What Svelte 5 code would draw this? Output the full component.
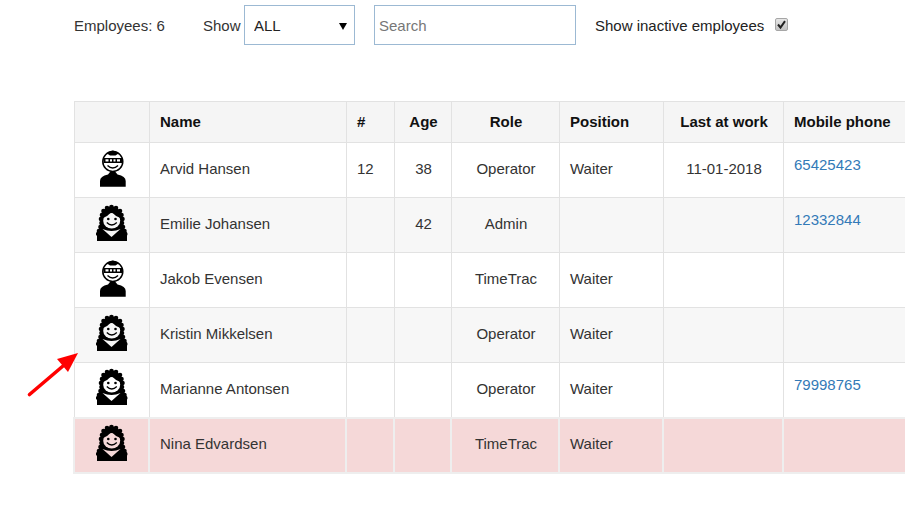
<script>
  const employees = [
    { name: 'Arvid Hansen', gender: 'm', num: '12', age: '38', role: 'Operator', position: 'Waiter', last: '11-01-2018', phone: '65425423' },
    { name: 'Emilie Johansen', gender: 'f', num: '', age: '42', role: 'Admin', position: '', last: '', phone: '12332844' },
    { name: 'Jakob Evensen', gender: 'm', num: '', age: '', role: 'TimeTrac', position: 'Waiter', last: '', phone: '' },
    { name: 'Kristin Mikkelsen', gender: 'f', num: '', age: '', role: 'Operator', position: 'Waiter', last: '', phone: '' },
    { name: 'Marianne Antonsen', gender: 'f', num: '', age: '', role: 'Operator', position: 'Waiter', last: '', phone: '79998765' },
    { name: 'Nina Edvardsen', gender: 'f', num: '', age: '', role: 'TimeTrac', position: 'Waiter', last: '', phone: '', inactive: true }
  ];

  // curls around the woman's hair outline
  const curls = [
    [15.5, 3], [11, 4], [20, 4], [7.5, 7], [24, 7], [6, 11], [25.5, 11], [5, 15], [26.5, 15],
    [5.5, 19], [26, 19], [4.5, 23], [27, 23], [3, 27], [28.5, 27], [2.2, 30], [29.3, 30]
  ];
</script>

<div class="page">
  <div class="filters">
    <span class="count">Employees: 6</span>
    <label class="show" for="show">Show</label>
    <div class="select-wrap">
      <select id="show">
        <option>ALL</option>
      </select>
    </div>
    <input class="search" type="text" placeholder="Search" />
    <label class="inactive" for="inactive">Show inactive employees</label>
    <span class="check">
      <input id="inactive" type="checkbox" checked />
      <svg viewBox="0 0 13 13" width="13" height="13"><path d="M3 6.5 L5.5 9.5 L10 3.2" fill="none" stroke="#222" stroke-width="2" /></svg>
    </span>
  </div>

  <table>
    <colgroup>
      <col style="width:75px" /><col style="width:197px" /><col style="width:48px" /><col style="width:57px" />
      <col style="width:108px" /><col style="width:104px" /><col style="width:120px" /><col style="width:140px" />
    </colgroup>
    <thead>
      <tr>
        <th></th>
        <th class="left">Name</th>
        <th class="left">#</th>
        <th>Age</th>
        <th>Role</th>
        <th class="left">Position</th>
        <th>Last at work</th>
        <th class="left">Mobile phone</th>
      </tr>
    </thead>
    <tbody>
      {#each employees as e}
        <tr class:inactive-row={e.inactive}>
          <td class="avatar">
            {#if e.gender === 'm'}
              <svg class="man" viewBox="0 0 26 38" width="26" height="38">
                <circle class="face" cx="12.8" cy="12.5" r="10" stroke="#000" stroke-width="1.5" />
                <path d="M7 4.5 Q12.8 -1.5 18.6 4.5 L15.5 6.5 H10 Z" fill="#000" />
                <rect x="3.5" y="9" width="18.6" height="5" fill="#000" />
                <rect class="face" x="5.5" y="10.3" width="3" height="2.2" />
                <rect class="face" x="10" y="10.3" width="2" height="2.2" />
                <rect class="face" x="13.5" y="10.3" width="2" height="2.2" />
                <rect class="face" x="17" y="10.3" width="3" height="2.2" />
                <path d="M7.5 16.5 Q12.8 21.5 18 16.5" fill="none" stroke="#000" stroke-width="1.4" />
                <path d="M0 37.8 V32 Q0 27 8 25.5 L10 23 H15.5 L17.5 25.5 Q25.7 27 25.7 32 V37.8 Z" fill="#000" />
              </svg>
            {:else}
              <svg viewBox="0 0 32 38" width="32" height="38">
                <path d="M6 8 Q15.5 -3 25 8 L28 26 L31 30 V37 H1 V30 L3 26 Z" fill="#000" />
                {#each curls as [cx, cy]}
                  <circle {cx} {cy} r="2.3" fill="#000" />
                {/each}
                <ellipse class="face" cx="15.7" cy="16.8" rx="8.5" ry="7.8" />
                <path d="M7 14 Q12 12 15.5 8 Q19 12 24.5 14 L23 8 L15.5 6 L8 8 Z" fill="#000" />
                <circle cx="12.3" cy="15" r="1.3" fill="#000" />
                <circle cx="19.5" cy="15" r="1.3" fill="#000" />
                <path d="M10.8 18.5 Q15.7 23.5 20.8 18.5" fill="none" stroke="#000" stroke-width="1.3" />
                <path class="face" d="M6.5 25 Q15.7 29 24.5 25 L15.5 33 Z" />
              </svg>
            {/if}
          </td>
          <td class="left">{e.name}</td>
          <td class="left">{e.num}</td>
          <td>{e.age}</td>
          <td>{e.role}</td>
          <td class="left">{e.position}</td>
          <td>{e.last}</td>
          <td class="left phone"><a href="#top">{e.phone}</a></td>
        </tr>
      {/each}
    </tbody>
  </table>

  <svg class="arrow" viewBox="0 0 56 50" width="56" height="50">
    <path d="M4.5 44.5 L38 16" stroke="#f00" stroke-width="3.6" stroke-linecap="round" />
    <path d="M53 3 L32 9 L43 22 Z" fill="#f00" />
  </svg>
</div>

<style>
  :global(body) {
    background: #fff;
    overflow: hidden;
  }
  .page {
    position: relative;
    width: 905px;
    height: 512px;
    overflow: hidden;
    font-family: 'Liberation Sans', Arial, sans-serif;
    font-size: 15px;
    color: #333;
  }
  .filters {
    display: flex;
    align-items: center;
    height: 40px;
    padding: 5px 0 0 74px;
  }
  .count {
    width: 129px;
  }
  .show {
    width: 41px;
  }
  .select-wrap {
    position: relative;
    width: 111px;
    height: 40px;
  }
  .select-wrap::after {
    content: '';
    position: absolute;
    right: 8px;
    top: 18px;
    border-left: 4px solid transparent;
    border-right: 4px solid transparent;
    border-top: 7px solid #000;
    pointer-events: none;
  }
  select {
    appearance: none;
    width: 100%;
    height: 100%;
    box-sizing: border-box;
    border: 1px solid #9cb9d3;
    border-radius: 0;
    background: #fff;
    padding: 0 9px;
    font: inherit;
    color: #222;
  }
  .search {
    width: 202px;
    height: 40px;
    box-sizing: border-box;
    margin-left: 19px;
    border: 1px solid #9cb9d3;
    padding: 0 4px;
    font: inherit;
    color: #333;
  }
  .search::placeholder {
    color: #777;
    opacity: 1;
  }
  .inactive {
    margin-left: 19px;
    color: #222;
  }
  .check {
    position: relative;
    width: 13px;
    height: 13px;
    margin-left: 11px;
    margin-top: -2px;
  }
  .check input {
    appearance: none;
    display: block;
    width: 13px;
    height: 13px;
    margin: 0;
    border: 1px solid #a6a6a6;
    border-radius: 2px;
    background: linear-gradient(#e6e6e6, #c4c4c4);
  }
  .check svg {
    position: absolute;
    left: 0;
    top: 0;
  }
  table {
    table-layout: fixed;
    width: 849px;
    margin: 56px 0 0 73px;
    border-collapse: collapse;
  }
  th, td {
    border: 1px solid #e2e2e2;
    padding: 0 9px 0 11px;
    text-align: center;
    box-sizing: border-box;
  }
  th {
    height: 41px;
    padding-bottom: 2px;
    background: #f5f5f5;
    color: #111;
    font-weight: bold;
  }
  td {
    height: 55px;
    padding-bottom: 3px;
    color: #333;
  }
  th.left, td.left {
    text-align: left;
    padding-left: 10.5px;
  }
  tbody tr:nth-child(even) td {
    background: #f7f7f7;
  }
  tbody tr.inactive-row td {
    background: #f5d8d8;
    border-color: #eeeeee;
    border-width: 2px;
  }
  tbody tr.inactive-row td.left {
    padding-left: 10px;
  }
  td.avatar {
    padding: 0 0 5px 1px;
    line-height: 0;
  }
  .avatar svg {
    display: inline-block;
  }
  .avatar svg.man {
    margin: 0 0 0 1px;
  }
  .face {
    fill: #fff;
  }
  tr:nth-child(even) .face {
    fill: #f7f7f7;
  }
  tr.inactive-row .face {
    fill: #f5d8d8;
  }
  td.phone {
    vertical-align: top;
    padding-top: 13px;
  }
  a {
    color: #337ab7;
    text-decoration: none;
  }
  .arrow {
    position: absolute;
    left: 25px;
    top: 350px;
  }
</style>
